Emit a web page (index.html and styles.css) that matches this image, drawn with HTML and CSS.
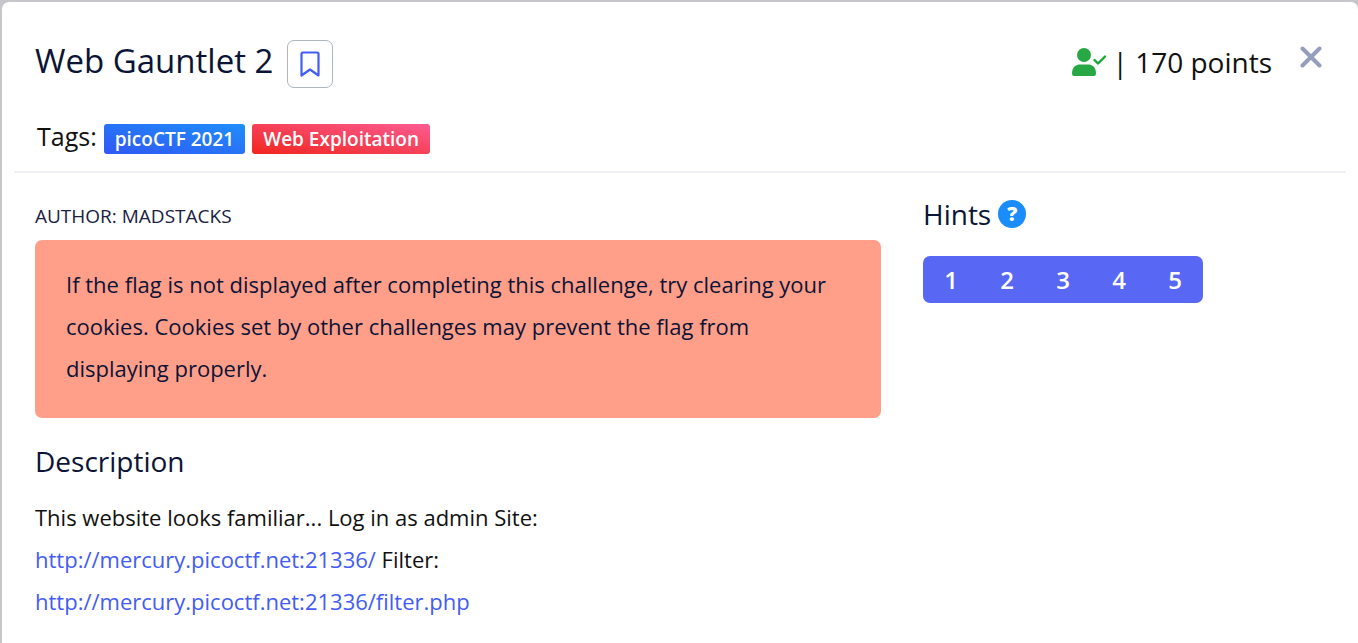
FILE: index.html
```html
<!DOCTYPE html>
<html lang="en">
<head>
    <meta charset="UTF-8">
    <meta name="viewport" content="width=device-width, initial-scale=1.0">
    <title>Web Gauntlet 2</title>
    <link rel="stylesheet" href="styles.css">
</head>
<body>
    <div class="modal" role="dialog" aria-labelledby="challengeTitle">
        <header class="modal-header">
            <div class="heading">
                <div class="title-row">
                    <h1 id="challengeTitle">Web Gauntlet 2</h1>
                    <button type="button" class="bookmark" aria-label="Bookmark">
                        <svg width="20" height="26" viewBox="0 0 20 26"><path d="M1.500 24.500V3Q1.500 1.500 3 1.500H17Q18.500 1.500 18.500 3V24.500L10 18.500Z" fill="none" stroke="#445cf5" stroke-width="2.200" stroke-linejoin="round"/></svg>
                    </button>
                </div>
                <div class="tags">
                    <span class="tags-label">Tags:</span>
                    <span class="badge badge-blue">picoCTF 2021</span>
                    <span class="badge badge-red">Web Exploitation</span>
                </div>
            </div>
            <div class="points">
                <svg width="36" height="30" viewBox="0 0 36 30" aria-label="Solved">
                    <circle cx="13" cy="8" r="7" fill="#28a745"/>
                    <path d="M1 26.500C1 20 5 17.500 9 17.500H17C21 17.500 25 20 25 26.500Q25 29 23 29H3Q1 29 1 26.500Z" fill="#28a745"/>
                    <path d="M23.500 13L27 16.500L34 9.500" fill="none" stroke="#14a838" stroke-width="2.400" stroke-linecap="round" stroke-linejoin="round"/>
                </svg>
                <span>| 170 points</span>
            </div>
            <button type="button" class="close" aria-label="Close">
                <svg width="22" height="22" viewBox="0 0 22 22"><path d="M2.500 2.500L19.500 19.500M19.500 2.500L2.500 19.500" stroke="#959eba" stroke-width="4" stroke-linecap="round"/></svg>
            </button>
        </header>

        <div class="modal-body">
            <section class="main">
                <p class="author">AUTHOR: MADSTACKS</p>
                <div class="notice">If the flag is not displayed after completing this challenge, try clearing your cookies. Cookies set by other challenges may prevent the flag from displaying properly.</div>
                <h2>Description</h2>
                <p class="description">
                    This website looks familiar... Log in as admin Site:<br>
                    <a href="http://mercury.picoctf.net:21336/">http://mercury.picoctf.net:21336/</a> Filter:<br>
                    <a href="http://mercury.picoctf.net:21336/filter.php">http://mercury.picoctf.net:21336/filter.php</a>
                </p>
            </section>
            <aside class="hints">
                <div class="hints-title">
                    <h2>Hints</h2>
                    <button type="button" class="help" aria-label="About hints">?</button>
                </div>
                <div class="hint-buttons">
                    <button type="button">1</button>
                    <button type="button">2</button>
                    <button type="button">3</button>
                    <button type="button">4</button>
                    <button type="button">5</button>
                </div>
            </aside>
        </div>
    </div>
</body>
</html>
```
FILE: styles.css
```css
* { box-sizing: border-box; }
body { margin: 0; padding: 2px 0 0 2px; background: #c6c6cb; color: #111; font-family: "Open Sans", sans-serif; font-size: 22px; line-height: 42px; }
h1, h2, p { margin: 0; font-weight: 400; }
h1, h2 { color: #0b1436; }
button { padding: 0; border: 0; font-family: inherit; cursor: pointer; }
svg { display: block; }
a { color: #445cf5; text-decoration: none; }

.modal { min-height: calc(100vh - 2px); padding: 0 12px; background: white; border-radius: 7px 7px 0 0; }

/* header */
.modal-header { display: flex; align-items: flex-start; padding: 38px 24px 17px 21px; border-bottom: 2px solid #eff0f4; }
.heading { flex: 1; }
.title-row { display: flex; align-items: flex-start; gap: 14px; }
h1 { font-size: 33px; line-height: 42px; }
.bookmark { display: flex; align-items: center; justify-content: center; width: 46px; height: 48px; background: white; border: 1px solid #adb5bd; border-radius: 7px; }
.tags { display: flex; align-items: flex-end; gap: 7px; margin: 31px 0 0 2px; }
.tags-label { font-size: 25px; line-height: 35px; }
.badge { padding: 0 11px; border-radius: 3px; color: white; font-size: 19px; font-weight: 600; line-height: 30px; }
.badge-blue { background: linear-gradient(to top right, #3058f5, #1f8efa); }
.badge-red { background: linear-gradient(to top right, #f1261f, #fc5c92); }
.points { display: flex; align-items: center; gap: 6px; font-size: 28px; line-height: 44px; }
.close { margin: 6px 0 0 28px; background: none; }

/* content */
.modal-body { display: grid; grid-template-columns: 2fr 1fr; }
.main { padding: 22px 21px; }
.hints { padding: 20px 21px; }
.author { color: #1a2142; font-size: 19px; }
.notice { margin-top: 3px; padding: 23px 31px 29px; border-radius: 7px; background: #ff9f89; color: #0b1436; }
h2 { font-size: 28px; }
.notice + h2 { margin: 22px 0 14px; }
.hints-title { display: flex; align-items: center; gap: 7px; }
.help { width: 28px; height: 28px; border-radius: 50%; background: #1b8cfc; color: white; font-size: 20px; font-weight: 800; line-height: 28px; }
.hint-buttons { display: inline-flex; margin-top: 21px; border-radius: 7px; overflow: hidden; }
.hint-buttons button { width: 56px; height: 47px; background: #5868f4; color: white; font-size: 24px; font-weight: 600; }
```
